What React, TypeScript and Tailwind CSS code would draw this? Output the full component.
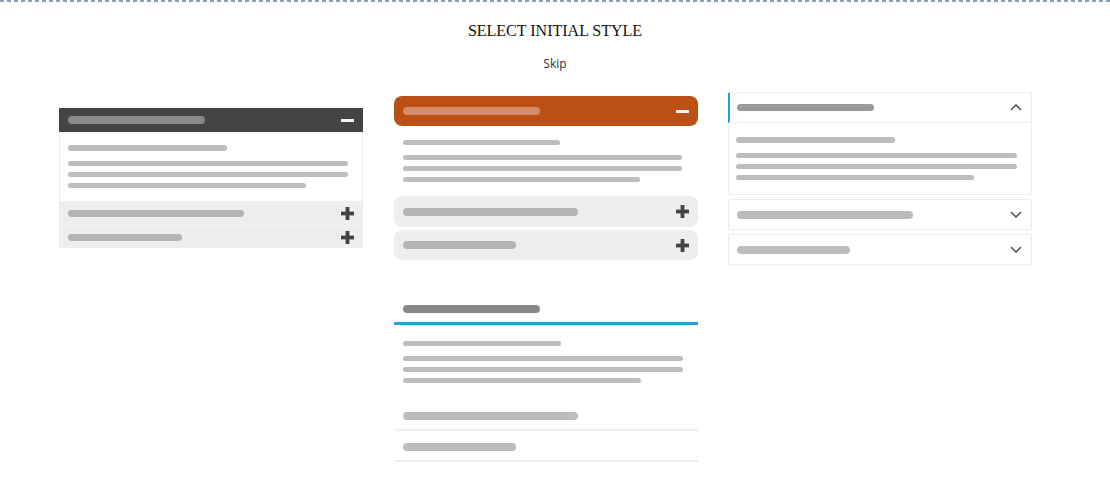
import React from "react";

type BarProps = {
  w: number;
  h?: number;
  color?: string;
};

// pill-shaped placeholder line
function Bar({ w, h = 5, color = "bg-[#bdbdbd]" }: BarProps) {
  return <div className={`rounded-full ${color} ${h === 8 ? "h-[8px]" : h === 7 ? "h-[7px]" : h === 6 ? "h-[6px]" : "h-[5px]"}`} style={{ width: w }} />;
}

function Plus() {
  return (
    <svg width="13" height="13" viewBox="0 0 13 13" className="shrink-0">
      <rect x="0" y="4.6" width="13" height="3.8" fill="#444" />
      <rect x="4.6" y="0" width="3.8" height="13" fill="#444" />
    </svg>
  );
}

function Minus() {
  return <div className="h-[3px] w-[13px] shrink-0 bg-[#f2f2f2]" />;
}

function Chevron({ up }: { up?: boolean }) {
  return (
    <svg width="12" height="7" viewBox="0 0 12 7" className="shrink-0">
      <polyline
        points={up ? "1,6 6,1 11,6" : "1,1 6,6 11,1"}
        fill="none"
        stroke="#444"
        strokeWidth="1.4"
      />
    </svg>
  );
}

type LinesProps = {
  first: number;
  firstH?: number;
  rest: number[];
  gapTop: string;
};

function BodyLines({ first, firstH = 6, rest, gapTop }: LinesProps) {
  return (
    <div className="flex flex-col">
      <Bar w={first} h={firstH} />
      <div className={`${gapTop} flex flex-col gap-[6px]`}>
        {rest.map((w, i) => (
          <Bar key={i} w={w} />
        ))}
      </div>
    </div>
  );
}

function DarkCard() {
  return (
    <div className="mt-[16px] flex w-[304px] flex-col">
      <div className="flex h-[24px] items-center justify-between bg-[#444] px-[9px]">
        <Bar w={137} h={8} color="bg-[#8a8a8a]" />
        <Minus />
      </div>
      <div className="border-x border-[#eee] bg-white px-[8px] pt-[13px] pb-[13px]">
        <BodyLines first={159} rest={[280, 280, 238]} gapTop="mt-[10px]" />
      </div>
      <div className="flex h-[24px] items-center justify-between bg-[#eee] px-[9px]">
        <Bar w={176} h={7} color="bg-[#b4b4b4]" />
        <Plus />
      </div>
      <div className="flex h-[23px] items-center justify-between border-t border-[#f7f7f7] bg-[#eee] px-[9px]">
        <Bar w={114} h={7} color="bg-[#b4b4b4]" />
        <Plus />
      </div>
    </div>
  );
}

function OrangeCard() {
  return (
    <div className="flex w-[304px] flex-col">
      <div className="flex h-[30px] items-center justify-between rounded-[8px] bg-[#bb5016] px-[9px]">
        <Bar w={137} h={8} color="bg-[#d68c6b]" />
        <Minus />
      </div>
      <div className="px-[9px] pt-[14px] pb-[14px]">
        <BodyLines first={157} firstH={5} rest={[279, 279, 237]} gapTop="mt-[10px]" />
      </div>
      <div className="flex flex-col gap-[3px]">
        <div className="flex h-[31px] items-center justify-between rounded-[8px] bg-[#eee] px-[9px]">
          <Bar w={175} h={8} color="bg-[#b4b4b4]" />
          <Plus />
        </div>
        <div className="flex h-[30px] items-center justify-between rounded-[8px] bg-[#eee] px-[9px]">
          <Bar w={113} h={8} color="bg-[#b4b4b4]" />
          <Plus />
        </div>
      </div>
    </div>
  );
}

function TabCard() {
  return (
    <div className="mt-[36px] flex w-[304px] flex-col">
      <div className="flex h-[29px] items-center border-b-[3px] border-[#2a9fd6] px-[9px]">
        <Bar w={137} h={8} color="bg-[#888]" />
      </div>
      <div className="px-[9px] pt-[16px] pb-[17px]">
        <BodyLines first={158} firstH={5} rest={[280, 280, 238]} gapTop="mt-[10px]" />
      </div>
      <div className="border-b-2 border-[#eee] px-[9px] pt-[12px] pb-[9px]">
        <Bar w={175} h={8} color="bg-[#bcbcbc]" />
      </div>
      <div className="border-b-2 border-[#eee] px-[9px] pt-[12px] pb-[9px]">
        <Bar w={113} h={8} color="bg-[#bcbcbc]" />
      </div>
    </div>
  );
}

function OutlineCard() {
  return (
    <div className="flex w-[304px] flex-col gap-[4px]">
      <div className="flex flex-col border-y border-r border-[#eee]">
        <div className="flex h-[30px] items-center justify-between border-b border-l-2 border-b-[#eee] border-l-[#2a9fd6] pr-[9px] pl-[7px]">
          <Bar w={137} h={7} color="bg-[#9a9a9a]" />
          <Chevron up />
        </div>
        <div className="border-l border-[#eee] px-[7px] pt-[14px] pb-[14px]">
          <BodyLines first={159} rest={[281, 281, 238]} gapTop="mt-[10px]" />
        </div>
      </div>
      <div className="flex h-[31px] items-center justify-between border border-[#eee] pr-[9px] pl-[8px]">
        <Bar w={176} h={8} color="bg-[#bcbcbc]" />
        <Chevron />
      </div>
      <div className="flex h-[31px] items-center justify-between border border-[#eee] pr-[9px] pl-[8px]">
        <Bar w={113} h={8} color="bg-[#bcbcbc]" />
        <Chevron />
      </div>
    </div>
  );
}

export default function App() {
  return (
    <div className="flex h-[498px] w-full flex-col overflow-hidden bg-white">
      <div className="h-[2px] w-full bg-[repeating-linear-gradient(90deg,#8c9cb5_0px,#8c9cb5_4px,transparent_4px,transparent_7px)]" />
      <h1 className="mt-[19px] text-center font-['Liberation_Serif',serif] text-[16px] leading-[20px] text-[#111]">
        SELECT INITIAL STYLE
      </h1>
      <button
        type="button"
        className="mx-auto mt-[15px] font-['Open_Sans',sans-serif] text-[12px] leading-[16px] text-[#333]"
      >
        Skip
      </button>
      <div className="mt-[20px] flex items-start gap-[30.5px] pl-[59px]">
        <DarkCard />
        <div className="mt-[4px] flex flex-col">
          <OrangeCard />
          <TabCard />
        </div>
        <OutlineCard />
      </div>
    </div>
  );
}
